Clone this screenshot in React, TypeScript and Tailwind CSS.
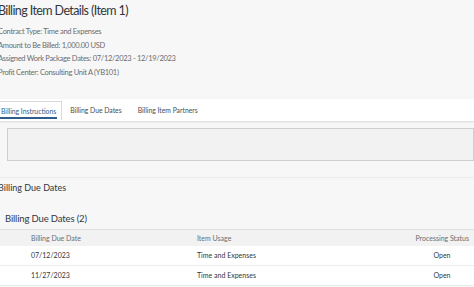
import React from "react";

const font = { fontFamily: "Lato, 'Open Sans', sans-serif" };

export default function App() {
  const rows = [
    { date: "07/12/2023", usage: "Time and Expenses", status: "Open" },
    { date: "11/27/2023", usage: "Time and Expenses", status: "Open" },
  ];
  return (
    <div className="w-[474px] h-[287px] overflow-hidden bg-[#f7f7f7] text-[#32363a]" style={font}>
      <div className="-ml-[2px] w-[476px]">
        {/* Header */}
        <div className="h-[99px] bg-[#f7f7f7] pt-[2px]">
          <div className="text-[12.5px] leading-[17px] tracking-[-0.6px] text-[#32363a]">Billing Item Details (Item 1)</div>
          <div className="mt-[6px] flex flex-col text-[7.5px] leading-[13.5px] tracking-[-0.3px] text-[#6a6d70]">
            <div>Contract Type: Time and Expenses</div>
            <div>Amount to Be Billed: 1,000.00 USD</div>
            <div>Assigned Work Package Dates: 07/12/2023 - 12/19/2023</div>
            <div>Profit Center: Consulting Unit A (YB101)</div>
          </div>
        </div>
        {/* Tabs */}
        <div className="h-[22px] bg-white flex items-stretch text-[6.8px] shadow-[0_1px_2px_rgba(0,0,0,0.12)] relative">
          <div className="mt-[2px] h-[19px] pl-[2px] pr-[5px] border border-[#d9d9d9] border-b-0 bg-white flex flex-col justify-center relative">
            <span className="text-[#2d5e8e]">Billing Instructions</span>
            <div className="absolute left-0 right-[4px] bottom-[1px] h-[2px] bg-[#2e5d8c]" />
          </div>
          <div className="ml-[8px] flex items-center text-[#4a4d50]">Billing Due Dates</div>
          <div className="ml-[16px] flex items-center text-[#4a4d50]">Billing Item Partners</div>
        </div>
        {/* Instructions box */}
        <div className="pt-[7px] pl-[9px] pb-[16px] bg-[#f7f7f7]">
          <div className="h-[33px] bg-[#f2f2f2] border border-[#cfcfcf]" />
        </div>
        <div className="h-px bg-[#ececec]" />
        {/* Billing due dates section */}
        <div className="pt-[3px] text-[9px] leading-[14px] text-[#32363a]">Billing Due Dates</div>
        <div className="pt-[17px] pl-[7px] text-[9.5px] leading-[14px] tracking-[-0.15px] text-[#32363a]">Billing Due Dates (2)</div>
        <div className="mt-[3px] bg-[#f2f2f2] border-t border-[#e0e0e0] h-[17px] flex items-center text-[7px] text-[#6a6d70]">
          <div className="w-[199px] pl-[33px]">Billing Due Date</div>
          <div className="flex-1">Item Usage</div>
          <div className="w-[80px] text-right pr-[5px]">Processing Status</div>
        </div>
        {rows.map((r, i) => (
          <div key={i} className="bg-white border-b border-[#ececec] h-[20px] flex items-center text-[7px] text-[#32363a]">
            <div className="w-[199px] pl-[33px]">{r.date}</div>
            <div className="flex-1">{r.usage}</div>
            <div className="w-[80px] text-center pl-[16px]">{r.status}</div>
          </div>
        ))}
      </div>
    </div>
  );
}
